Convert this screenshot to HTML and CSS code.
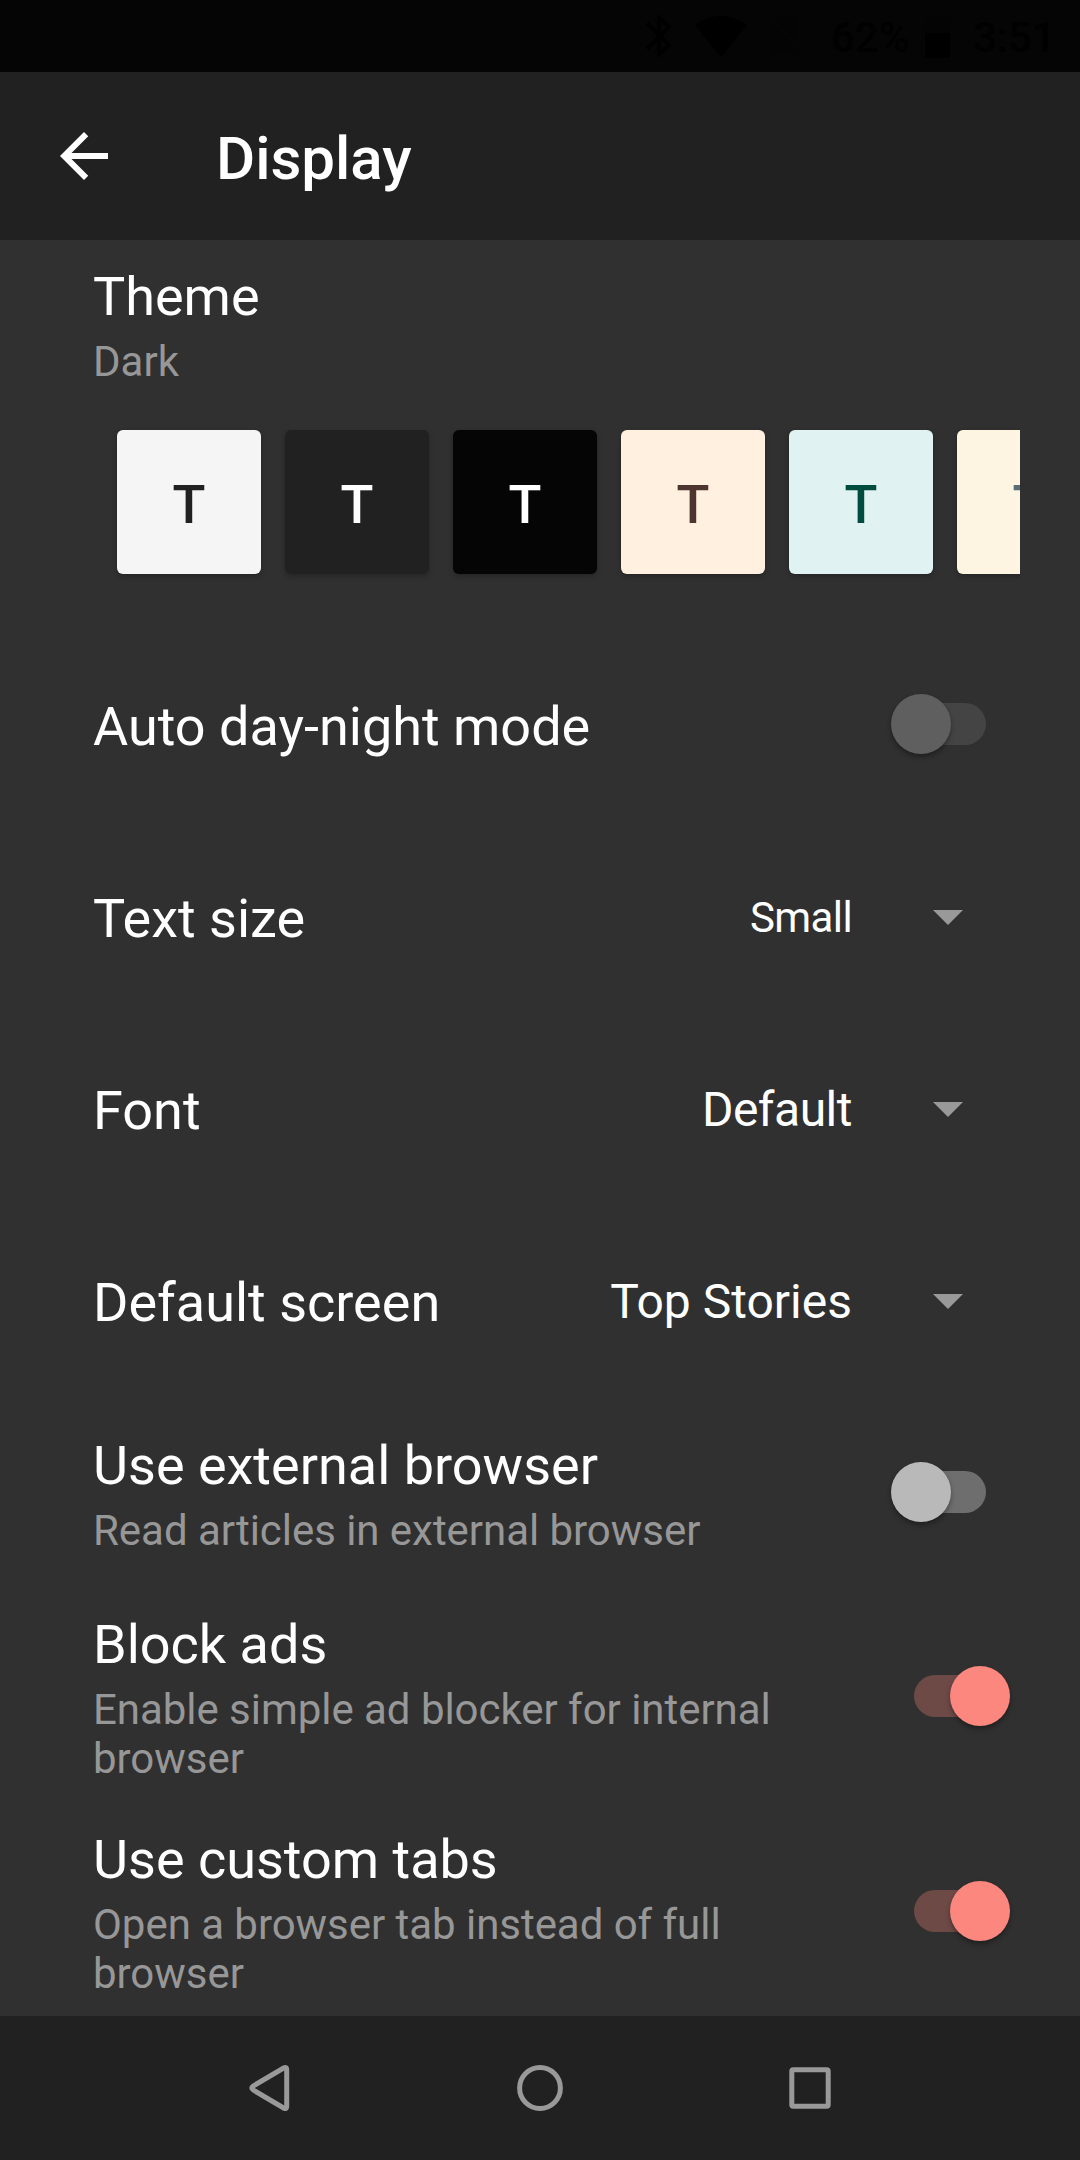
FILE: index.html
```html
<!DOCTYPE html>
<html lang="en">
<head>
<meta charset="utf-8">
<title>Display</title>
<link rel="stylesheet" href="styles.css">
</head>
<body>
<div class="screen">
  <div class="status-bar">
    <svg class="status-bluetooth" viewBox="0 0 26 42"><path d="M2 8 L24 30 L14 39 V3 L24 12 L2 34" fill="none" stroke="#000" stroke-width="4"/></svg>
    <svg class="status-wifi" viewBox="0 0 52 41"><path d="M0 9 Q26 -9 52 9 L28 39 Q26 42 24 39 Z"/></svg>
    <svg class="status-sim" viewBox="0 0 36 42"><path d="M12 2 H30 V27 L8 6 Z M4 8 L32 36 V39 H4 Z"/></svg>
    <span class="status-percent">62%</span>
    <svg class="status-battery" viewBox="0 0 25 44"><path class="battery-empty" d="M8 0 H17 V4 H25 V19 H0 V4 H8 Z"/><path d="M0 19 H25 V42 Q25 44 23 44 H2 Q0 44 0 42 Z"/></svg>
    <span class="status-clock">3:51</span>
  </div>

  <header class="app-bar">
    <svg class="back" viewBox="0 0 24 24"><path d="M20 11H7.83l5.59-5.59L12 4l-8 8 8 8 1.41-1.41L7.83 13H20z"/></svg>
    <h1 class="app-title">Display</h1>
  </header>

  <main class="settings">
    <section class="theme">
      <div class="title">Theme</div>
      <div class="summary">Dark</div>
      <div class="swatches">
        <div class="swatch light">T</div>
        <div class="swatch dark">T</div>
        <div class="swatch black">T</div>
        <div class="swatch sepia">T</div>
        <div class="swatch green">T</div>
        <div class="swatch solarized">T</div>
      </div>
    </section>

    <div class="row">
      <div class="title">Auto day-night mode</div>
      <div class="toggle disabled"><span class="thumb"></span></div>
    </div>
    <div class="row select">
      <div class="title">Text size</div>
      <div class="value small">Small</div>
      <svg class="caret" viewBox="0 0 30 15"><path d="M0 0H30L15 15Z"/></svg>
    </div>
    <div class="row select">
      <div class="title">Font</div>
      <div class="value font-name">Default</div>
      <svg class="caret" viewBox="0 0 30 15"><path d="M0 0H30L15 15Z"/></svg>
    </div>
    <div class="row select">
      <div class="title">Default screen</div>
      <div class="value">Top Stories</div>
      <svg class="caret" viewBox="0 0 30 15"><path d="M0 0H30L15 15Z"/></svg>
    </div>
    <div class="row">
      <div class="info">
        <div class="title">Use external browser</div>
        <div class="summary">Read articles in external browser</div>
      </div>
      <div class="toggle"><span class="thumb"></span></div>
    </div>
    <div class="row tall">
      <div class="info">
        <div class="title">Block ads</div>
        <div class="summary">Enable simple ad blocker for internal browser</div>
      </div>
      <div class="toggle on"><span class="thumb"></span></div>
    </div>
    <div class="row tall">
      <div class="info">
        <div class="title">Use custom tabs</div>
        <div class="summary">Open a browser tab instead of full browser</div>
      </div>
      <div class="toggle on"><span class="thumb"></span></div>
    </div>
  </main>

  <nav class="nav-bar">
    <svg class="nav-icon" viewBox="0 0 48 48"><path d="M7.5 21.8 L38 3.8 Q40.7 2.6 40.7 5.5 V42.5 Q40.7 45.4 38 44.2 L7.5 26.2 Q4 24 7.5 21.8 Z"/></svg>
    <svg class="nav-icon" viewBox="0 0 48 48"><circle cx="24" cy="24" r="20.4"/></svg>
    <svg class="nav-icon" viewBox="0 0 48 48"><rect x="5.8" y="5.8" width="36.4" height="36.4" rx="1.5"/></svg>
  </nav>
</div>
</body>
</html>
```
FILE: styles.css
```css
* {
  box-sizing: border-box;
}

body {
  margin: 0;
  background: #303030;
  color: #fff;
  font-family: Roboto, "Liberation Sans", sans-serif;
}

.screen {
  display: flex;
  flex-direction: column;
  width: 1080px;
  height: 2160px;
  overflow: hidden;
}

/* Status bar */
.status-bar {
  display: flex;
  align-items: center;
  flex: none;
  height: 72px;
  padding-left: 645px;
  background: #050505;
  color: #010101;
  font-size: 42px;
  font-weight: 500;
  line-height: 49px;
  white-space: nowrap;
}

.status-bluetooth {
  width: 26px;
  height: 42px;
}

.status-wifi {
  width: 52px;
  height: 41px;
  margin-left: 24px;
}

.status-sim {
  width: 36px;
  height: 42px;
  margin-left: 20px;
  fill: #040404;
}

.status-percent {
  width: 94px;
  margin-left: 28px;
  padding-top: 2px;
}

.status-battery {
  width: 25px;
  height: 44px;
}

.battery-empty {
  fill: #040404;
}

.status-clock {
  margin-left: 23px;
  padding-top: 2px;
}

/* App bar */
.app-bar {
  display: flex;
  align-items: center;
  flex: none;
  height: 168px;
  padding-left: 48px;
  background: #212121;
}

.back {
  width: 72px;
  height: 72px;
  fill: #fff;
}

.app-title {
  margin: 0 0 0 96px;
  padding-top: 6px;
  font-size: 60px;
  font-weight: 500;
  line-height: 70px;
}

/* Settings list */
.settings {
  flex: 1;
  min-height: 0;
  overflow: hidden;
}

.title {
  font-size: 54px;
  line-height: 63px;
}

.summary {
  color: #979797;
  font-size: 42px;
  line-height: 49px;
}

.theme {
  height: 390px;
  padding: 25px 60px 0 93px;
}

.theme .summary {
  margin-top: 9px;
}

.swatches {
  display: flex;
  gap: 24px;
  height: 168px;
  margin-top: 32px;
  padding: 12px 0 12px 24px;
  overflow: hidden;
}

.swatch {
  flex: none;
  width: 144px;
  height: 144px;
  padding-top: 3px;
  border-radius: 6px;
  box-shadow: 0 2px 5px rgba(0, 0, 0, 0.25);
  font-size: 54px;
  font-weight: 500;
  line-height: 144px;
  text-align: center;
}

.light {
  background: #f5f5f5;
  color: #212121;
}

.dark {
  background: #212121;
}

.black {
  background: #050505;
}

.sepia {
  background: #fff0df;
  color: #4e342e;
}

.green {
  background: #e0f2f1;
  color: #004d40;
}

.solarized {
  background: #fdf5e2;
  color: #586e75;
}

.row {
  display: flex;
  align-items: center;
  justify-content: space-between;
  height: 192px;
  padding: 0 70px 0 93px;
}

.tall {
  height: 215px;
}

.info {
  width: 740px;
}

.info .summary {
  padding-top: 9px;
  letter-spacing: -0.04px;
}

.select {
  padding-right: 117px;
}

.value {
  margin: 0 81px 0 auto;
  font-size: 48px;
  line-height: 56px;
}

.value.small {
  padding-bottom: 2px;
  font-size: 42px;
  letter-spacing: -0.6px;
  line-height: 49px;
}

.value.font-name {
  letter-spacing: -0.5px;
}

.caret {
  width: 30px;
  height: 15px;
  margin-bottom: 2px;
  fill: #999;
}

/* Toggle switch */
.toggle {
  display: flex;
  align-items: center;
  width: 72px;
  height: 42px;
  margin: 0 24px 5px 0;
  border-radius: 21px;
  background: #6e6e6e;
}

.tall .toggle {
  margin-bottom: 4px;
}

.thumb {
  flex: none;
  width: 60px;
  height: 60px;
  margin-left: -23.5px;
  border-radius: 50%;
  background: #b9b9b9;
  box-shadow: 0 3px 5px rgba(0, 0, 0, 0.35);
}

.disabled {
  background: #444;
}

.disabled .thumb {
  background: #5f5f5f;
}

.on {
  background: #6e4a47;
}

.on .thumb {
  margin-left: 35.5px;
  background: #fc877f;
}

/* Navigation bar */
.nav-bar {
  display: flex;
  align-items: center;
  justify-content: center;
  gap: 222px;
  flex: none;
  height: 144px;
  background: #212121;
}

.nav-icon {
  width: 48px;
  height: 48px;
  fill: none;
  stroke: #999;
  stroke-width: 5;
}
```
